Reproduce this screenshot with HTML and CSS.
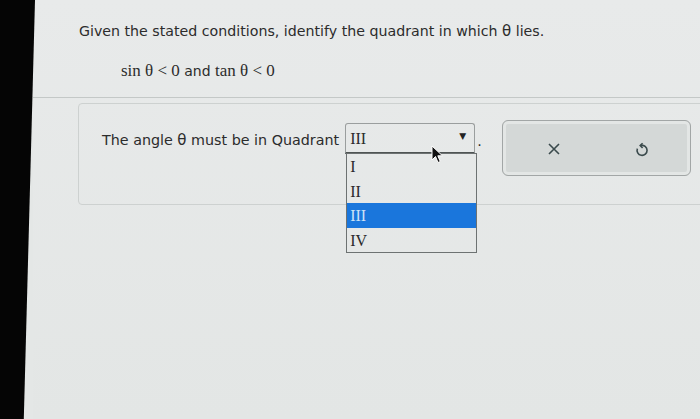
FILE: index.html
```html
<!DOCTYPE html>
<html>
<head>
<meta charset="utf-8">
<link rel="stylesheet" href="styles.css">
</head>
<body>
<div class="screen">
  <div class="bezel"></div>
  <main class="page">
    <p class="prompt">Given the stated conditions, identify the quadrant in which <span class="theta">θ</span> lies.</p>
    <p class="cond"><span class="m">sin θ &lt; 0</span> and <span class="m">tan θ &lt; 0</span></p>
    <div class="rule"></div>
    <div class="answer">
      <div class="sentence">
        <span class="label">The angle <span class="theta">θ</span> must be in Quadrant</span>
        <div class="select-wrap">
          <div class="select"><span class="sel-val">III</span><span class="caret">▼</span></div>
          <ul class="options">
            <li>I</li>
            <li>II</li>
            <li class="on">III</li>
            <li>IV</li>
          </ul>
          <svg class="cursor" width="13" height="19" viewBox="0 0 13 19"><path d="M1 1 L1 15 L4.5 11.5 L7 17.5 L9.3 16.5 L6.8 10.8 L11.5 10.8 Z" fill="#111" stroke="#fff" stroke-width="1"/></svg>
        </div>
        <span class="dot">.</span>
      </div>
      <div class="tools">
        <svg class="ico" width="14" height="14" viewBox="0 0 14 14"><path d="M2 2 L12 12 M12 2 L2 12" stroke="#3a4a4c" stroke-width="1.6" fill="none"/></svg>
        <svg class="ico" width="14" height="15" viewBox="0 0 14 15"><path d="M6 3.5 A5 5 0 1 1 2.4 6.6" stroke="#3a4a4c" stroke-width="1.6" fill="none"/><path d="M7.6 1.2 L5.2 3.6 L7.6 6" stroke="#3a4a4c" stroke-width="1.6" fill="none"/></svg>
      </div>
    </div>
  </main>
</div>
</body>
</html>
```
FILE: styles.css
```css
html, body {
  margin: 0;
  padding: 0;
  width: 700px;
  height: 419px;
  overflow: hidden;
  background: #e4e7e6;
}
.screen {
  display: flex;
  width: 700px;
  height: 419px;
}
.bezel {
  flex: 0 0 35px;
  background: #050505;
  clip-path: polygon(0 0, 100% 0, 68% 100%, 0 100%);
}
.page {
  flex: 1;
  margin-left: -2px;
  font-family: "DejaVu Sans", Verdana, sans-serif;
  color: #2c2c2c;
  background: linear-gradient(180deg, #e8eaea 0%, #e3e6e5 100%);
}
.prompt {
  margin: 22px 0 0 46px;
  font-size: 14.2px;
  line-height: 18px;
}
.theta {
  font-family: "DejaVu Sans", sans-serif;
  font-size: 15px;
}
.cond {
  margin: 22px 0 0 88px;
  font-size: 14px;
  line-height: 18px;
}
.m {
  font-family: "Liberation Serif", "Times New Roman", serif;
  font-size: 17px;
}
.rule {
  margin: 17px 0 0 0;
  height: 1px;
  background: #c4c8c7;
}
.answer {
  margin: 5px 0 0 45px;
  width: 640px;
  height: 102px;
  border: 1px solid #cdd1d0;
  border-radius: 4px;
  display: flex;
  align-items: flex-start;
  box-sizing: border-box;
}
.sentence {
  display: flex;
  align-items: flex-start;
  margin: 19px 0 0 23px;
  font-size: 14.3px;
}
.label {
  margin-top: 8px;
  line-height: 18px;
}
.select-wrap {
  position: relative;
  margin-left: 6px;
  width: 130px;
}
.select {
  box-sizing: border-box;
  height: 31px;
  border: 1px solid #9a9e9e;
  border-bottom: 2px solid #4f5454;
  border-radius: 3px 3px 0 0;
  display: flex;
  align-items: center;
  justify-content: space-between;
  padding: 0 8px 0 4px;
}
.sel-val {
  font-family: "Liberation Serif", "Times New Roman", serif;
  font-size: 16px;
  color: #2a2a2a;
  margin-top: 2px;
}
.caret {
  font-size: 9px;
  color: #222;
  margin-top: -5px;
}
.options {
  position: absolute;
  left: 1px;
  top: 30px;
  width: 131px;
  margin: 0;
  padding: 0;
  list-style: none;
  border: 1px solid #6d7272;
  box-sizing: border-box;
  font-family: "Liberation Serif", "Times New Roman", serif;
  font-size: 16px;
  color: #2a2a2a;
}
.options li {
  height: 24.5px;
  line-height: 26px;
  padding-left: 3px;
}
.options li.on {
  background: #1a76dc;
  color: #cfe3f7;
}
.cursor {
  position: absolute;
  left: 86px;
  top: 22px;
}
.dot {
  margin: 9px 0 0 2px;
  line-height: 18px;
}
.tools {
  margin: 16px 0 0 20px;
  width: 189px;
  height: 56px;
  box-sizing: border-box;
  border: 1px solid #a2a6a6;
  border-radius: 6px;
  background: #d4d8d7;
  box-shadow: inset 0 0 0 3px #e3e6e5;
  display: flex;
  align-items: center;
  justify-content: flex-start;
  gap: 74px;
  padding: 0 0 0 44px;
}
.ico {
  display: block;
  margin-top: 2px;
}
```
